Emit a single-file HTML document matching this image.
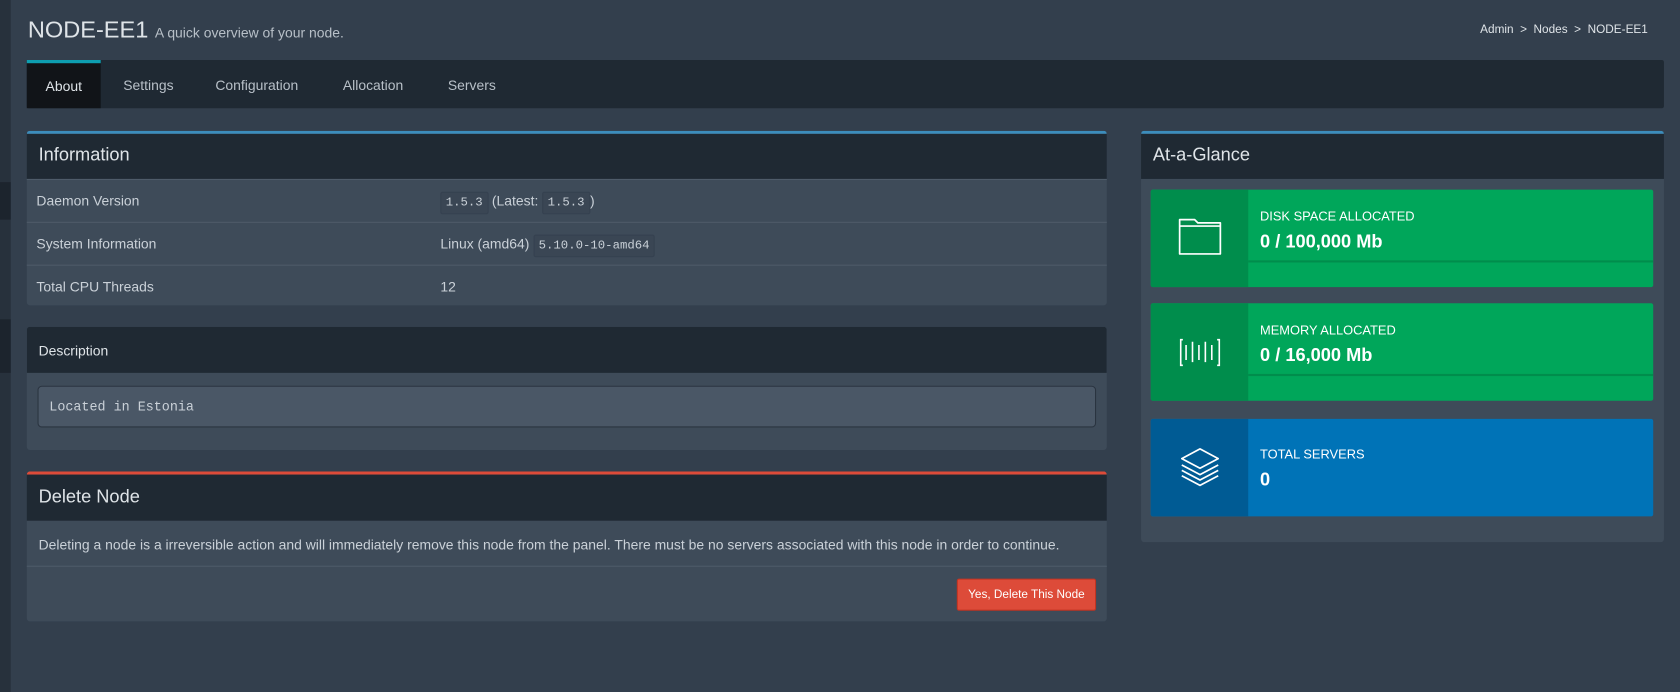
<!DOCTYPE html>
<html><head><style>
html,body{margin:0;padding:0;width:1680px;height:692px;overflow:hidden;background:#333f4d;}
#w{position:absolute;left:0;top:0;width:1568px;height:646px;transform:scale(1.07143);transform-origin:0 0;font-family:"Liberation Sans",sans-serif;color:#cad1d8;}
.a{position:absolute;box-sizing:border-box;}
.hd{background:#1f2933;}
.bd{background:#3e4b59;}
.code{background:#3a4654;border:1px solid #354150;border-radius:2px;font-family:"Liberation Mono",monospace;font-size:11.5px;padding:3px 4px;color:#cad1d8;}
.row{position:absolute;left:0;right:0;height:40px;border-top:1px solid #4e5b69;font-size:13px;line-height:39px;}
.row span.l{position:absolute;left:9px;}
.row span.v{position:absolute;left:386px;}
.ib{position:absolute;left:9px;width:469px;height:91px;border-radius:2px;overflow:hidden;}
.ib .ic{position:absolute;left:0;top:0;width:91px;height:100%;}
.ib .t{position:absolute;left:102px;top:18px;font-size:12px;color:#fff;}
.ib .n{position:absolute;left:102px;top:39px;font-size:17px;font-weight:bold;color:#fff;}
.ib .bar{position:absolute;left:91px;right:0;top:66px;height:2px;background:#008d4c;}
</style></head><body><div id="w">
<div class="a" style="left:0;top:0;width:10px;height:646px;background:#27313c"></div>
<div class="a" style="left:0;top:170px;width:10px;height:35px;background:#1c242d"></div>
<div class="a" style="left:0;top:298px;width:10px;height:50px;background:#1c242d"></div>
<div class="a" style="left:26px;top:15px;font-size:22px;color:#dfe4e8;white-space:nowrap">NODE-EE1 <span style="font-size:13px;color:#b8c0c8">A quick overview of your node.</span></div>
<div class="a" style="right:30px;top:22px;font-size:11px;color:#dfe4e8;white-space:nowrap">Admin &nbsp;&gt;&nbsp; Nodes &nbsp;&gt;&nbsp; NODE-EE1</div>
<div class="a hd" style="left:25px;top:56px;width:1528px;height:45px;border-radius:2px;font-size:13px;color:#b8c0c8">
<div class="a" style="left:0;top:0;width:69px;height:45px;background:#111418;border-top:3px solid #0e9eb0;color:#dfe4e8;text-align:center;line-height:44px">About</div>
<div class="a" style="left:90px;top:0;line-height:48px">Settings</div>
<div class="a" style="left:176px;top:0;line-height:48px">Configuration</div>
<div class="a" style="left:295px;top:0;line-height:48px">Allocation</div>
<div class="a" style="left:393px;top:0;line-height:48px">Servers</div>
</div>
<div class="a bd" style="left:25px;top:122px;width:1008px;height:163px;border-top:3px solid #3c8dbc;border-radius:3px">
<div class="a hd" style="left:0;top:0;width:100%;height:42px;font-size:17px;line-height:40px;padding-left:11px;color:#dfe4e8">Information</div>
<div class="row" style="top:42px"><span class="l">Daemon Version</span><span class="v"><span class="code">1.5.3</span> (Latest: <span class="code">1.5.3</span>)</span></div>
<div class="row" style="top:82px"><span class="l">System Information</span><span class="v">Linux (amd64) <span class="code">5.10.0-10-amd64</span></span></div>
<div class="row" style="top:122px"><span class="l">Total CPU Threads</span><span class="v">12</span></div>
</div>
<div class="a bd" style="left:25px;top:305px;width:1008px;height:115px;border-radius:3px;overflow:hidden">
<div class="a hd" style="left:0;top:0;width:100%;height:43px;font-size:13px;line-height:46px;padding-left:11px;color:#dfe4e8">Description</div>
<div class="a" style="left:10px;top:55px;width:988px;height:39px;background:#4a5766;border:1px solid #2a3440;border-radius:4px;font-family:'Liberation Mono',monospace;font-size:12.5px;line-height:38px;padding-left:10px;color:#cad1d8">Located in Estonia</div>
</div>
<div class="a bd" style="left:25px;top:440px;width:1008px;height:140px;border-top:3px solid #dd4b39;border-radius:3px">
<div class="a hd" style="left:0;top:0;width:100%;height:43px;font-size:17px;line-height:42px;padding-left:11px;color:#dfe4e8">Delete Node</div>
<div class="a" style="left:11px;top:58px;font-size:13px;white-space:nowrap">Deleting a node is a irreversible action and will immediately remove this node from the panel. There must be no servers associated with this node in order to continue.</div>
<div class="a" style="left:0;top:85px;width:100%;height:1px;background:#4e5b69"></div>
<div class="a" style="left:868px;top:97px;width:130px;height:30px;background:#dd4b39;border:1px solid #c23321;border-radius:2px;color:#fff;font-size:11px;text-align:center;line-height:29px">Yes, Delete This Node</div>
</div>
<div class="a bd" style="left:1065px;top:122px;width:488px;height:384px;border-top:3px solid #3c8dbc;border-radius:3px">
<div class="a hd" style="left:0;top:0;width:100%;height:42px;font-size:17px;line-height:40px;padding-left:11px;color:#dfe4e8">At-a-Glance</div>
<div class="ib" style="top:52px;background:#00a65a"><div class="ic" style="background:#008d4c">
<svg width="91" height="91" viewBox="0 0 91 91"><path d="M27 28h14l3 3h21v29H27z M27 34h38" fill="none" stroke="#fff" stroke-width="1.6" stroke-linejoin="round"/></svg></div>
<div class="t">DISK SPACE ALLOCATED</div><div class="n">0 / 100,000 Mb</div><div class="bar"></div></div>
<div class="ib" style="top:158px;background:#00a65a"><div class="ic" style="background:#008d4c">
<svg width="91" height="91" viewBox="0 0 91 91"><path d="M30 34h-2v24h2 M62 34h2v24h-2 M33 39v14 M39 36v19 M45 39v14 M51 36v19 M57 39v14" fill="none" stroke="#fff" stroke-width="1.5"/></svg></div>
<div class="t">MEMORY ALLOCATED</div><div class="n">0 / 16,000 Mb</div><div class="bar"></div></div>
<div class="ib" style="top:266px;background:#0073b7"><div class="ic" style="background:#005b94">
<svg width="91" height="91" viewBox="0 0 91 91"><path d="M46 28l17 9-17 9-17-9z M29 43l17 9 17-9 M29 48l17 9 17-9 M29 53l17 9 17-9" fill="none" stroke="#fff" stroke-width="1.6" stroke-linejoin="round"/></svg></div>
<div class="t" style="top:26px">TOTAL SERVERS</div><div class="n" style="top:47px">0</div></div>
</div>
</div></body></html>
